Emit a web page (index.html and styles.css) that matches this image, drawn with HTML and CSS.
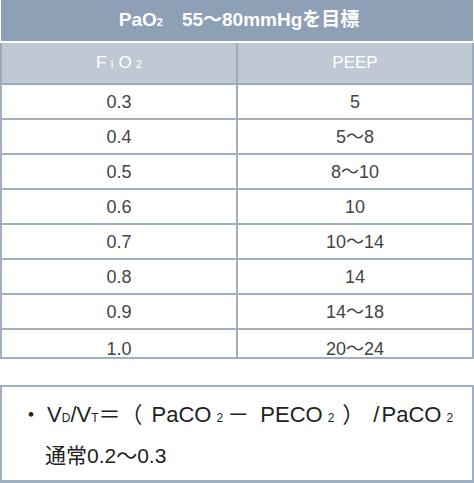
FILE: index.html
```html
<!DOCTYPE html>
<html lang="ja">
<head>
<meta charset="utf-8">
<link rel="stylesheet" href="styles.css">
</head>
<body>
<div class="page">
  <table class="peep">
    <thead>
      <tr><th colspan="2" class="title">PaO<span class="tsub">2</span>　55～80mmHgを目標</th></tr>
      <tr class="cols"><th>F<span class="sm">I</span>O<span class="sm2">2</span></th><th>PEEP</th></tr>
    </thead>
    <tbody>
      <tr><td>0.3</td><td>5</td></tr>
      <tr><td>0.4</td><td>5～8</td></tr>
      <tr><td>0.5</td><td>8～10</td></tr>
      <tr><td>0.6</td><td>10</td></tr>
      <tr><td>0.7</td><td>10～14</td></tr>
      <tr><td>0.8</td><td>14</td></tr>
      <tr><td>0.9</td><td>14～18</td></tr>
      <tr class="last"><td>1.0</td><td>20～24</td></tr>
    </tbody>
  </table>
  <div class="note">
    <p class="l1"><span class="dot">・</span>V<span class="sub">D</span>/V<span class="sub">T</span>＝<span class="po">（</span>PaCO<span class="sub2">2</span><span class="minus">－</span> PECO<span class="sub2">2</span><span class="pc">）</span><span class="sl">/</span>PaCO<span class="sub2">2</span></p>
    <p class="l2">通常0.2～0.3</p>
  </div>
</div>
</body>
</html>
```
FILE: styles.css
```css
html, body { margin: 0; padding: 0; background: #fff; }
body { font-family: "Liberation Sans", "Noto Sans CJK JP", sans-serif; }
.page { width: 474px; height: 483px; display: flex; flex-direction: column; }
.peep {
  width: 474px;
  border-collapse: collapse;
  table-layout: fixed;
  color: #444;
}
.peep th, .peep td { text-align: center; padding: 0; line-height: 20px; }
.title {
  background: #8da0b6;
  color: #fff;
  font-size: 19px;
  font-weight: bold;
  height: 41px;
  padding-left: 4px !important;
  border-bottom: 2px solid #fff;
}
.tsub { font-size: 11px; }
.cols th {
  background: #c0c9d3;
  color: #fff;
  font-weight: normal;
  font-size: 17px;
  height: 40px;
  border-bottom: 2px solid #9aabbd;
  border-left: 2px solid #9aabbd;
  border-right: 2px solid #9aabbd;
}
.cols .sm { font-size: 11px; margin: 0 5px 0 4px; }
.cols .sm2 { font-size: 11px; margin-left: 4px; }
.peep td {
  font-size: 18px;
  height: 33px;
  border: 2px solid #9fb0c2;
  border-top: none;
}
.peep .last td { height: 15px; line-height: 15px; padding-top: 12px; vertical-align: top; }
.note {
  margin-top: 26px;
  flex: 1;
  border: 2px solid #9fb0c2;
  border-bottom-width: 3px;
  padding: 7px 0 0 43px;
  color: #222;
  font-size: 21px;
}
.note p { margin: 0; line-height: 41px; height: 41px; white-space: nowrap; }
.note .l1 { margin-left: -25px; font-size: 22px; }
.note .dot { margin-right: 5px; }
.note .sub { font-size: 12px; }
.note .sub2 { font-size: 12px; margin: 0 4px 0 5px; }
.note .po { margin-right: 9px; }
.note .minus { margin-right: 5px; }
.note .pc { margin: 0 9px 0 4px; }
.note .sl { margin-right: 2px; }
```
